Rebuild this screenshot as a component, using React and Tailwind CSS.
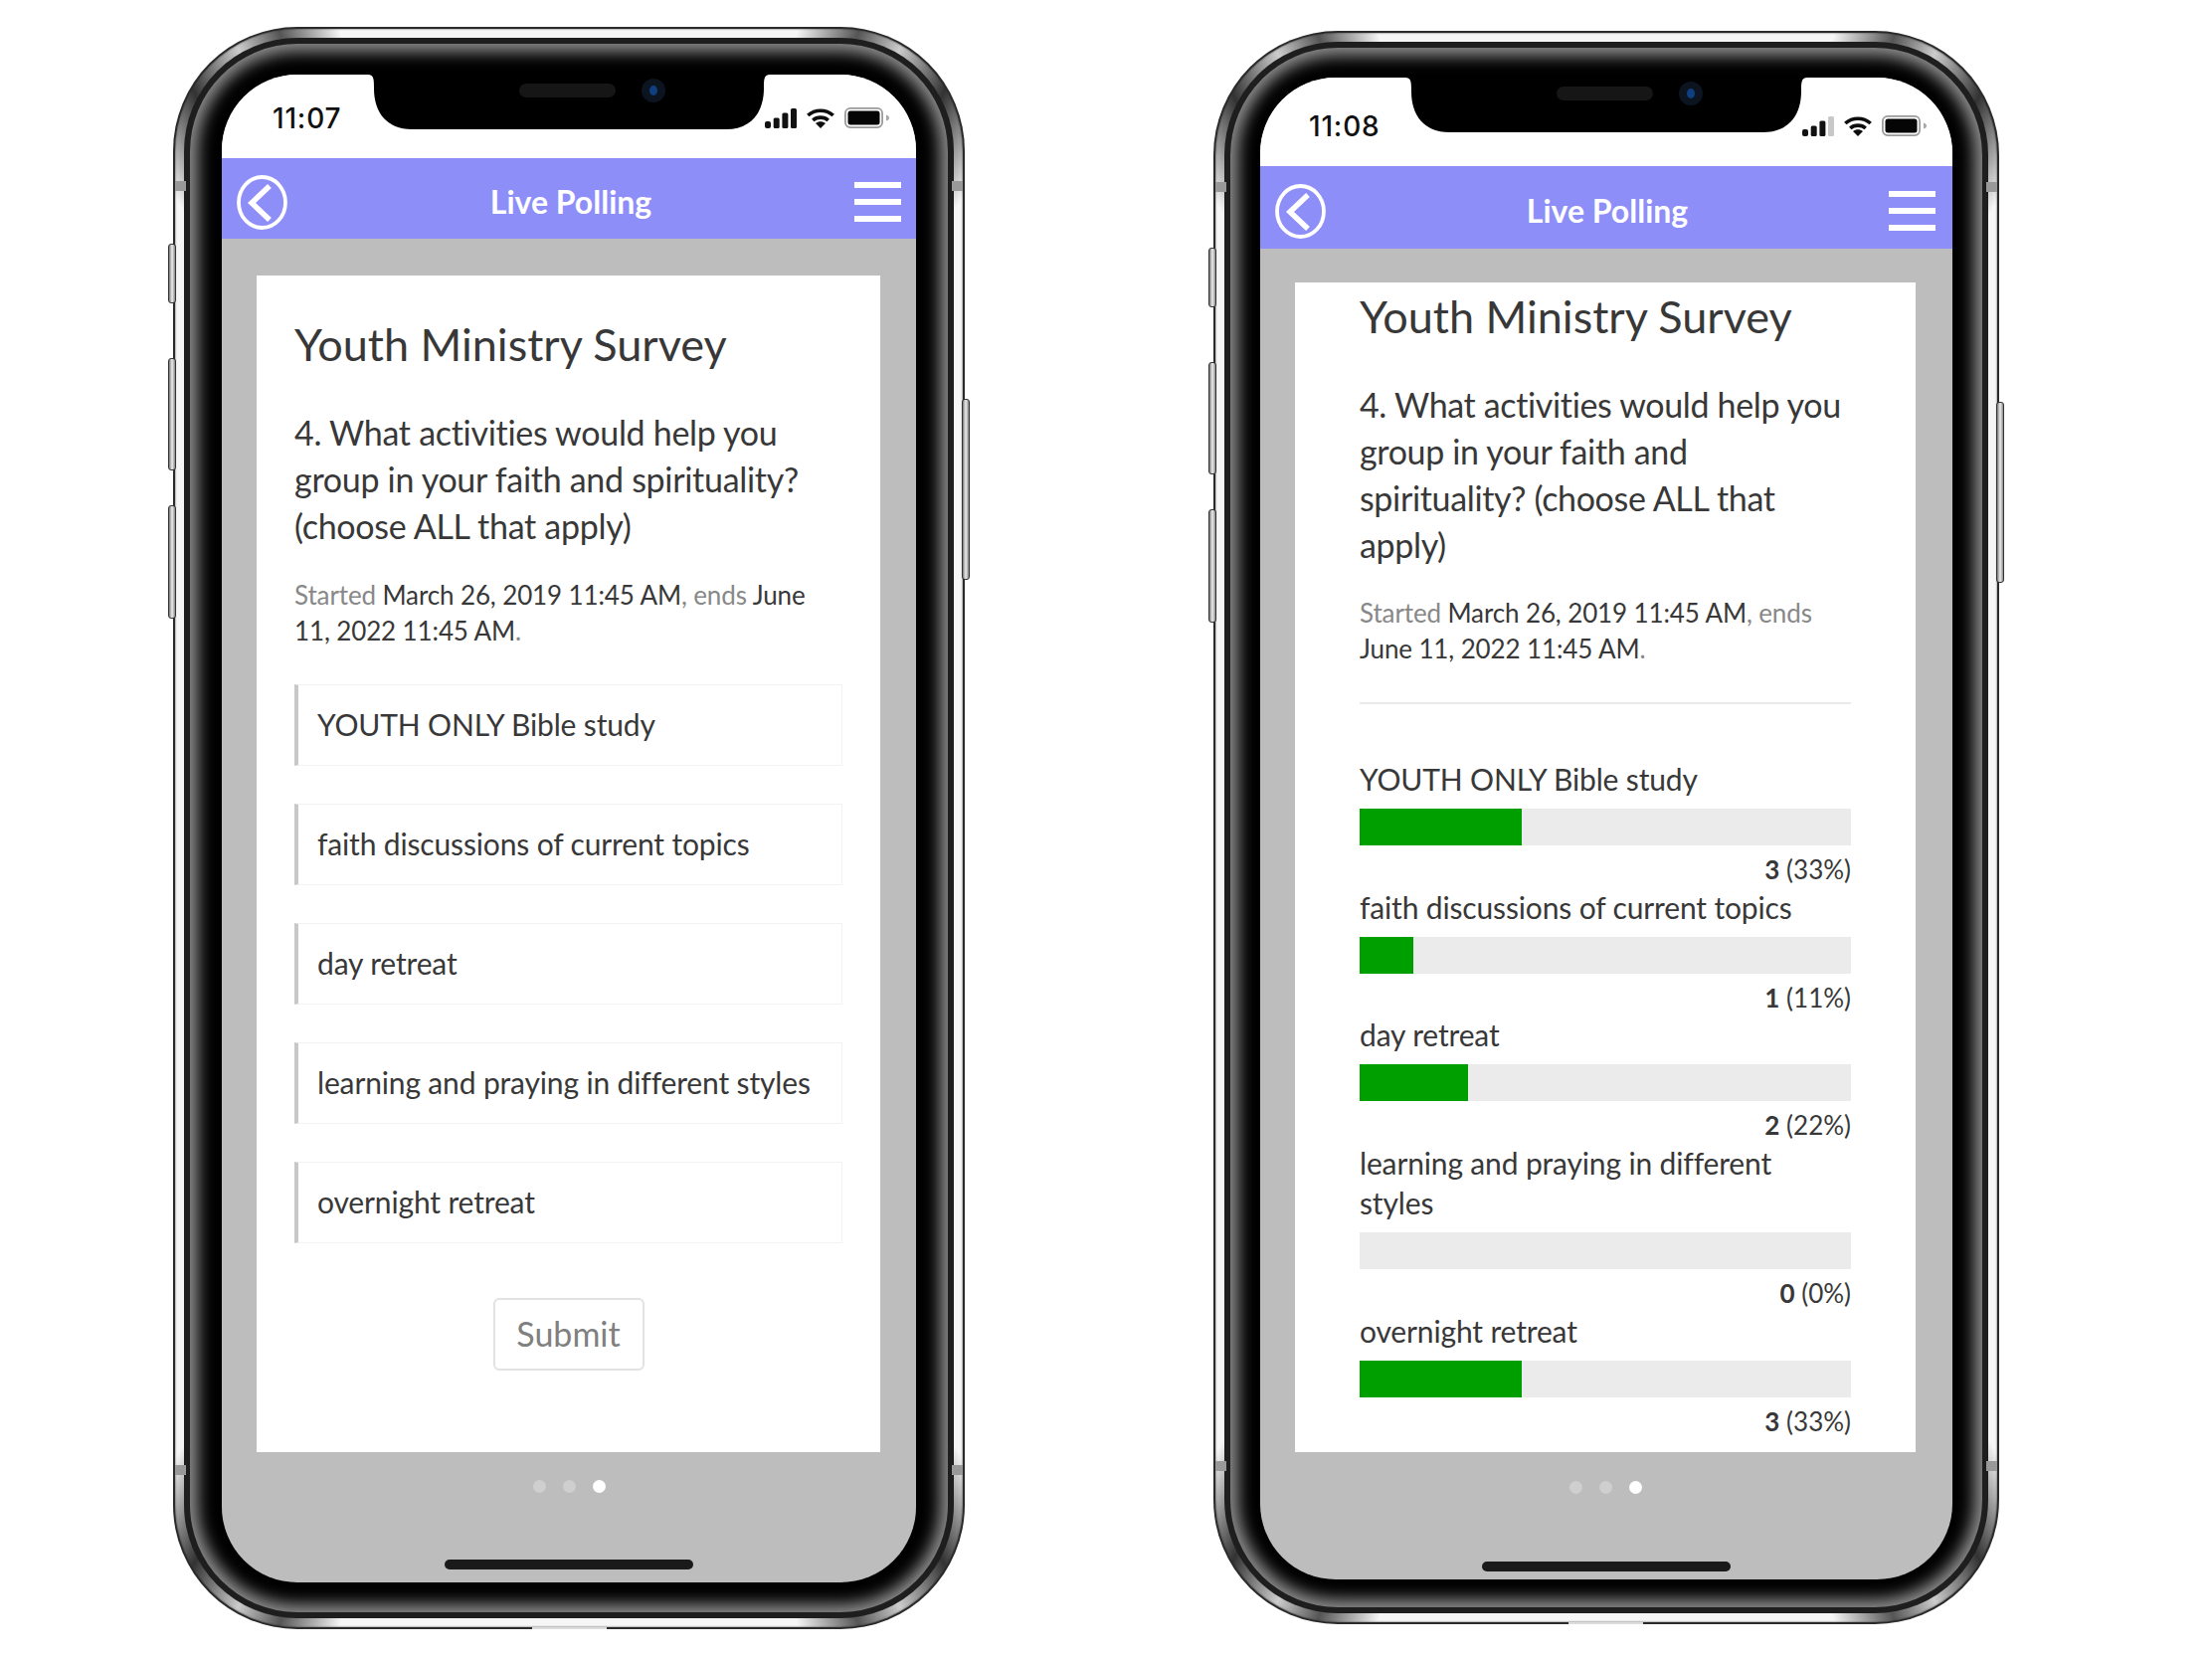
import React from "react";

const lato = "font-['Lato','Open_Sans',sans-serif]";

function Signal({ last }) {
  return (
    <svg width="32" height="20" viewBox="0 0 32 20">
      <rect x="0" y="13" width="6" height="7" rx="2" fill="#111" />
      <rect x="8.7" y="9.5" width="6" height="10.5" rx="1.5" fill="#111" />
      <rect x="17.4" y="4.5" width="6" height="15.5" rx="1.5" fill="#111" />
      <rect x="26" y="0" width="6" height="20" rx="1.5" fill={last} />
    </svg>
  );
}

function Wifi() {
  return (
    <svg width="28" height="20" viewBox="0 0 28 20" fill="none" stroke="#0d0d0d" strokeWidth="3.6">
      <path d="M1.3 7C8.5 .6 19.5 .6 26.7 7" />
      <path d="M6.3 12C10.5 8.2 17.5 8.2 21.7 12" />
      <path d="M14 20L9 15C12 12.6 16 12.6 19 15Z" fill="#0d0d0d" stroke="none" />
    </svg>
  );
}

function Battery() {
  return (
    <svg width="45" height="21" viewBox="0 0 45 21">
      <rect x=".9" y=".9" width="37.2" height="19.2" rx="5" fill="none" stroke="#9a9a9a" strokeWidth="1.8" />
      <rect x="3.5" y="3.5" width="32" height="14" rx="2.5" fill="#050505" />
      <path d="M42 7.5C44 8 45 9 45 10.5S44 13 42 13.5Z" fill="#a8a8a8" />
    </svg>
  );
}

function Notch() {
  return (
    <svg className="absolute left-1/2 top-0 -translate-x-1/2" width="404" height="56" viewBox="0 0 404 56">
      <path
        d="M0 0H404C398 0 398 5 398 14C398 38 385 55 360 55H44C19 55 6 38 6 14C6 5 6 0 0 0Z"
        fill="#000"
      />
      <rect x="152" y="9" width="97" height="14" rx="7" fill="#161616" />
      <circle cx="287" cy="16" r="12" fill="#0c1420" />
      <ellipse cx="287" cy="16" rx="4" ry="5" fill="#0f3f80" />
    </svg>
  );
}

function BackIcon() {
  return (
    <svg width="51" height="55" viewBox="0 0 51 55" fill="none" stroke="#fff" strokeWidth="3.8">
      <ellipse cx="25.5" cy="27.5" rx="23.5" ry="25.5" />
      <path d="M33 11L15 28L33 45" strokeWidth="5.5" />
    </svg>
  );
}

function Menu() {
  return (
    <div className="flex w-[47px] flex-col gap-[11px]">
      <div className="h-[6px] bg-white" />
      <div className="h-[6px] bg-white" />
      <div className="h-[6px] bg-white" />
    </div>
  );
}

function Dots({ cls }) {
  return (
    <div className={`flex justify-center gap-[17px] ${cls}`}>
      <div className="h-[13px] w-[13px] rounded-full bg-[#cfcfcf]" />
      <div className="h-[13px] w-[13px] rounded-full bg-[#cfcfcf]" />
      <div className="h-[13px] w-[13px] rounded-full bg-white" />
    </div>
  );
}

function Phone({ c, time, lastBar, children }) {
  return (
    <div className={`relative shrink-0 ${c.frame}`}>
      {c.buttons}
      <div className="h-full rounded-[125px] bg-[#2a2a2a] p-[2px]">
        <div className="h-full rounded-[123px] bg-[conic-gradient(#f6f6f6_0deg,#f6f6f6_16deg,#555_20deg,#ccc_23deg,#333_27deg,#f6f6f6_32deg,#f6f6f6_148deg,#333_153deg,#ccc_157deg,#555_160deg,#f6f6f6_164deg,#f6f6f6_196deg,#555_200deg,#ccc_203deg,#333_207deg,#f6f6f6_212deg,#f6f6f6_328deg,#333_333deg,#ccc_337deg,#555_340deg,#f6f6f6_344deg)] p-[9px] shadow-[inset_0_0_2px_#333]">
          <div className="h-full rounded-[114px] bg-[#1e1e1e] p-[6px]">
            <div className={`h-full rounded-[108px] bg-black shadow-[inset_0_0_16px_8px_#8f8f8f] ${c.pad}`}>
              <div className="relative flex h-full flex-col overflow-hidden rounded-[76px] bg-[#bdbdbd]">
                <div className={`flex shrink-0 items-center justify-between bg-white ${c.status}`}>
                  <span className="font-['Inter',sans-serif] text-[28px] font-medium leading-none tracking-[0.8px] text-[#111]">
                    {time}
                  </span>
                  <div className="flex items-center gap-[10px]">
                    <Signal last={lastBar} />
                    <Wifi />
                    <Battery />
                  </div>
                </div>
                <Notch />
                <div className={`flex shrink-0 items-center justify-between bg-[#8e8ef8] pl-[15px] pt-[7px] ${c.header}`}>
                  <BackIcon />
                  <span className={`${lato} text-[32px] font-bold leading-none text-white`}>Live Polling</span>
                  <Menu />
                </div>
                {children}
                <Dots cls={c.dots} />
                <div className={`mx-auto h-[10px] w-[250px] rounded-[5px] bg-[#1a1a1a] ${c.home}`} />
              </div>
            </div>
          </div>
        </div>
      </div>
    </div>
  );
}

const Btn = ({ cls }) => (
  <div className={`absolute w-[8px] rounded-[3px] border border-[#333] bg-[linear-gradient(90deg,#777,#eee,#888)] ${cls}`} />
);

const Band = ({ cls }) => <div className={`absolute h-[10px] w-[11px] bg-[#999] ${cls}`} />;

const Buttons1 = (
  <>
    <Btn cls="-left-[5px] top-[218px] h-[60px]" />
    <Btn cls="-left-[5px] top-[333px] h-[113px]" />
    <Btn cls="-left-[5px] top-[481px] h-[114px]" />
    <Btn cls="-right-[5px] top-[374px] h-[182px]" />
    <Band cls="left-[2px] top-[155px] z-10" />
    <Band cls="right-[2px] top-[155px] z-10" />
    <Band cls="left-[2px] top-[1446px] z-10" />
    <Band cls="right-[2px] top-[1446px] z-10" />
    <div className="absolute bottom-0 left-[361px] z-10 h-[2px] w-[75px] bg-[#dcdcdc]" />
  </>
);

const Buttons2 = (
  <>
    <Btn cls="-left-[5px] top-[218px] h-[60px]" />
    <Btn cls="-left-[5px] top-[333px] h-[113px]" />
    <Btn cls="-left-[5px] top-[481px] h-[114px]" />
    <Btn cls="-right-[5px] top-[373px] h-[182px]" />
    <Band cls="left-[2px] top-[152px] z-10" />
    <Band cls="right-[2px] top-[152px] z-10" />
    <Band cls="left-[2px] top-[1438px] z-10" />
    <Band cls="right-[2px] top-[1438px] z-10" />
    <div className="absolute bottom-0 left-[357px] z-10 h-[2px] w-[75px] bg-[#dcdcdc]" />
  </>
);

const conf1 = {
  frame: "ml-[174px] mt-[27px] h-[1611px] w-[796px]",
  pad: "px-[32px] pb-[30px] pt-[31px]",
  status: "h-[84px] pl-[51px] pr-[27px] pt-[3px]",
  header: "h-[81px] pr-[15px]",
  dots: "mt-[28px]",
  home: "mt-[67px]",
  buttons: Buttons1,
};
const conf2 = {
  frame: "ml-[250px] mt-[31px] h-[1602px] w-[790px]",
  pad: "px-[30px] pb-[28px] pt-[30px]",
  status: "h-[89px] pl-[49px] pr-[26px] pt-[8px]",
  header: "h-[83px] pr-[17px]",
  dots: "mt-[29px] pr-[2px]",
  home: "mt-[68px]",
  buttons: Buttons2,
};

const options = [
  "YOUTH ONLY Bible study",
  "faith discussions of current topics",
  "day retreat",
  "learning and praying in different styles",
  "overnight retreat",
];

const results = [
  { label: "YOUTH ONLY Bible study", n: 3, pct: 33 },
  { label: "faith discussions of current topics", n: 1, pct: 11 },
  { label: "day retreat", n: 2, pct: 22 },
  { label: "learning and praying in different styles", n: 0, pct: 0 },
  { label: "overnight retreat", n: 3, pct: 33 },
];

const Dates = ({ children }) => (
  <p className="text-[26px] leading-[36px] tracking-[-0.12px] text-[#888]">{children}</p>
);
const D = ({ children }) => <span className="text-[#383838]">{children}</span>;

function Left() {
  return (
    <div className={`${lato} ml-[35px] mt-[37px] h-[1183px] w-[627px] shrink-0 bg-white px-[38px] pt-[39px] text-[#383838]`}>
      <h1 className="text-[45px] font-normal leading-[60px]">Youth Ministry Survey</h1>
      <p className="mt-[35px] text-[34px] leading-[47px] tracking-[-0.3px]">
        4. What activities would help you group in your faith and spirituality? (choose ALL that apply)
      </p>
      <div className="mt-[28px]">
        <Dates>
          Started <D>March 26, 2019 11:45 AM</D>, ends <D>June 11, 2022 11:45 AM</D>.
        </Dates>
      </div>
      <div className="mt-[36px] flex flex-col gap-[38px]">
        {options.map((o) => (
          <div
            key={o}
            className="flex h-[82px] items-center border border-l-[4px] border-[#f2f2f2] border-l-[#c8c8c8] pb-[2px] pl-[19px] text-[30px] tracking-[-0.15px]"
          >
            {o}
          </div>
        ))}
      </div>
      <div className="mt-[55px] flex justify-center">
        <button className="h-[73px] w-[152px] rounded-[6px] border-2 border-[#e2e2e2] pb-[2px] text-[34px] text-[#808080]">
          Submit
        </button>
      </div>
    </div>
  );
}

function Right() {
  return (
    <div className={`${lato} ml-[35px] mt-[34px] h-[1176px] w-[624px] shrink-0 bg-white px-[65px] pt-[4px] text-[#383838]`}>
      <h1 className="text-[45px] font-normal leading-[60px]">Youth Ministry Survey</h1>
      <p className="mt-[35px] text-[34px] leading-[47px] tracking-[-0.35px]">
        4. What activities would help you group in your faith and spirituality? (choose ALL that apply)
      </p>
      <div className="mt-[27px]">
        <Dates>
          Started <D>March 26, 2019 11:45 AM</D>, ends <D>June 11, 2022 11:45 AM</D>.
        </Dates>
      </div>
      <div className="mt-[36px] h-[2px] bg-[#eaeaea]" />
      <div className="mt-[56px] flex flex-col">
        {results.map((r) => (
          <div key={r.label}>
            <div className="-mt-[1px] text-[30px] leading-[40px] tracking-[-0.15px]">{r.label}</div>
            <div className="mt-[10px] h-[37px] bg-[#ebebeb]">
              <div className="h-full bg-[#009f00]" style={{ width: `${r.pct}%` }} />
            </div>
            <div className="mt-[7px] text-right text-[26px] leading-[35.7px]">
              <b>{r.n}</b> ({r.pct}%)
            </div>
          </div>
        ))}
      </div>
    </div>
  );
}

export default function App() {
  return (
    <div className="flex h-[1668px] w-[2224px] items-start overflow-hidden bg-white">
      <Phone c={conf1} time="11:07" lastBar="#111">
        <Left />
      </Phone>
      <Phone c={conf2} time="11:08" lastBar="#c8c8c8">
        <Right />
      </Phone>
    </div>
  );
}
